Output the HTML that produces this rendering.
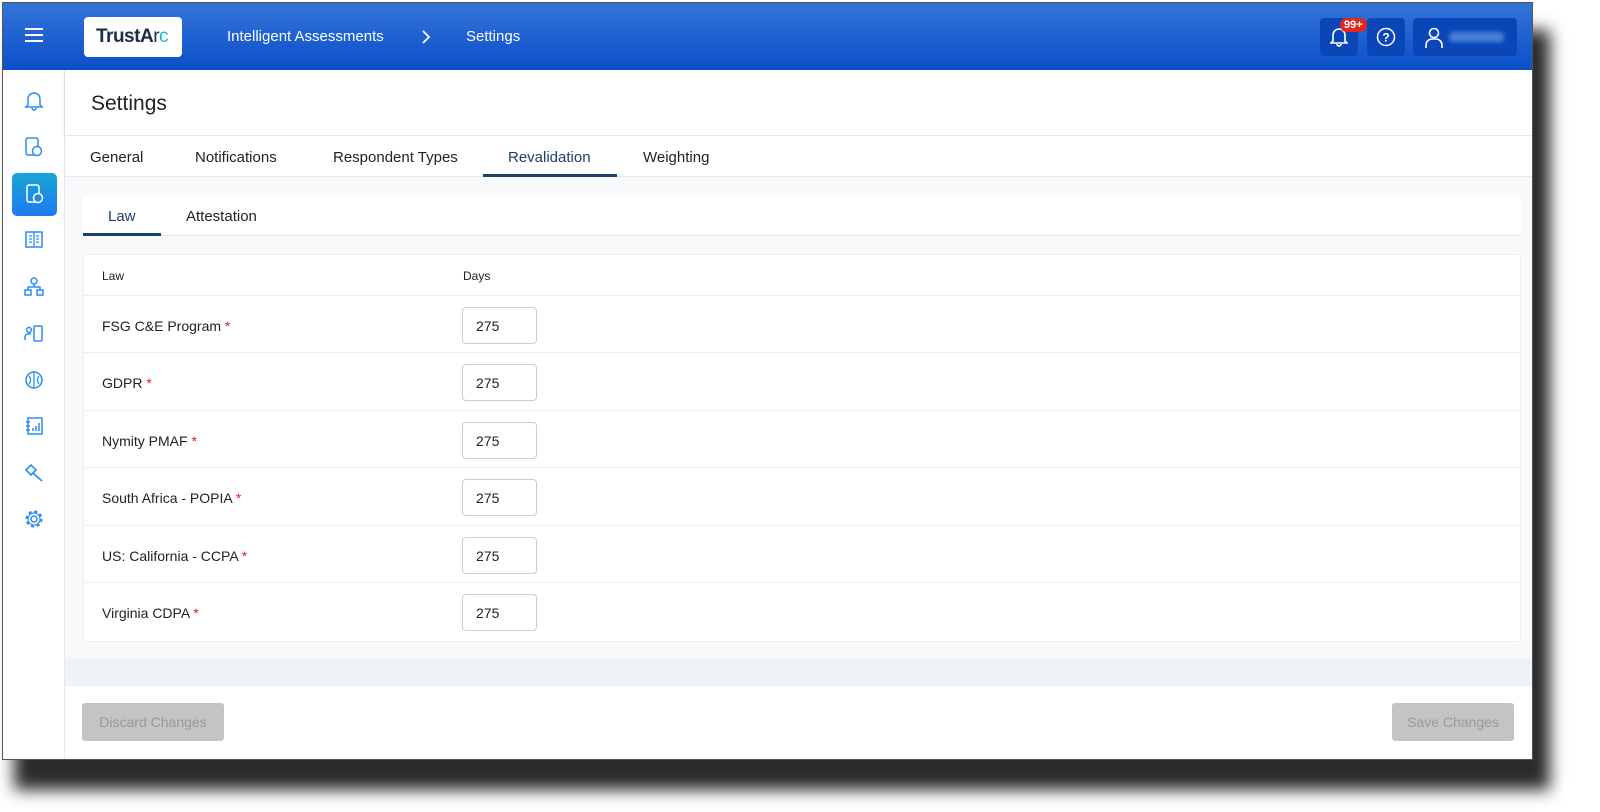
<!DOCTYPE html><html><head><style>
*{box-sizing:border-box;margin:0;padding:0}
body{width:1600px;height:812px;background:#fff;font-family:"Liberation Sans",sans-serif;position:relative;overflow:hidden;color:#222}
.shadow{position:absolute;left:14px;top:30px;width:1536px;height:760px;background:#2a2a2a;filter:blur(8px)}
.win{position:absolute;left:2px;top:2px;width:1531px;height:758px;background:#f7f9fb;overflow:hidden;border:1px solid #555}
.hdr{position:absolute;left:0;top:0;width:100%;height:67px;background:linear-gradient(#3474d9,#0b4fc8);color:#fff}
.logo{position:absolute;left:81px;top:14px;width:98px;height:40px;background:#fff;border-radius:4px;color:#1a2a4a;font-size:19px;font-weight:bold;padding:9px 0 0 12px;letter-spacing:-.5px}
.bc{position:absolute;top:25px;font-size:15px}
.hb{position:absolute;top:15px;height:38px;background:#0a46b8;border-radius:4px}
.side{position:absolute;left:0;top:67px;width:62px;bottom:0;background:#fff;border-right:1px solid #e4e8ee}
.side svg{position:absolute;left:21px}
.titl{position:absolute;left:62px;top:67px;right:0;height:65px;background:#fff;font-size:21px;padding:22px 0 0 26px;box-shadow:0 1px 3px rgba(0,0,0,.12)}
.tabs{position:absolute;left:62px;top:133px;right:0;height:41px;background:#fff;border-bottom:1px solid #e6e9ee;font-size:15px}
.tabs span{position:absolute;top:13px}
.sub{position:absolute;left:80px;top:192px;width:1438px;height:41px;background:#fff;border-bottom:1px solid #e6e9ee;font-size:15px}
.card{position:absolute;left:80px;top:251px;width:1438px;height:388px;background:#fff;border:1px solid #eceff3;border-radius:3px}
.row{position:absolute;left:0;width:100%;border-top:1px solid #edf0f3;font-size:14px}
.row .n{position:absolute;left:18px}
.row .i{position:absolute;left:378px;width:75px;height:37px;border:1px solid #c9ccd0;border-radius:4px;padding:10px 0 0 13px;font-size:14px}
.st{color:#e02020}
.band{position:absolute;left:62px;top:656px;right:0;height:27px;background:#eef3f7}
.foot{position:absolute;left:62px;top:683px;right:0;bottom:0;background:#fff}
.btn{position:absolute;top:17px;height:38px;background:#c4c4c4;border-radius:3px;color:#999;font-size:14px;padding:11px 0 0;text-align:center;white-space:nowrap}
</style></head><body>
<div class="shadow"></div>
<div class="win">
<div class="hdr">
<svg style="position:absolute;left:22px;top:25px" width="18" height="14"><path d="M0 1h18M0 7h18M0 13h18" stroke="#fff" stroke-width="2"/></svg>
<div class="logo">TrustA<span style="font-weight:normal">r</span><span style="color:#1fb3d6;font-weight:normal">c</span></div>
<div class="bc" style="left:224px">Intelligent Assessments</div>
<svg style="position:absolute;left:418px;top:27px" width="10" height="14"><path d="M2 1l6 6-6 6" stroke="#fff" stroke-width="1.8" fill="none"/></svg>
<div class="bc" style="left:463px">Settings</div>
<div class="hb" style="left:1317px;width:38px"><svg style="position:absolute;left:10px;top:9px" width="18" height="20"><path d="M3 14V8a6 6 0 0 1 12 0v6l2 2H1zM7 17a2 2 0 0 0 4 0" stroke="#fff" stroke-width="1.6" fill="none"/></svg></div>
<div style="position:absolute;left:1337px;top:15px;background:#e3261f;border-radius:8px;font-size:11px;font-weight:bold;padding:1px 4px">99+</div>
<div class="hb" style="left:1364px;width:38px"><svg style="position:absolute;left:9px;top:9px" width="20" height="20"><circle cx="10" cy="10" r="8.5" stroke="#fff" stroke-width="1.5" fill="none"/><text x="10" y="14.5" fill="#fff" font-size="12" font-weight="bold" text-anchor="middle" font-family="Liberation Sans">?</text></svg></div>
<div class="hb" style="left:1410px;width:104px"><svg style="position:absolute;left:12px;top:9px" width="18" height="22"><circle cx="9" cy="6" r="4.5" stroke="#fff" stroke-width="1.6" fill="none"/><path d="M1 21v-3a6 6 0 0 1 6-6h4a6 6 0 0 1 6 6v3" stroke="#fff" stroke-width="1.6" fill="none"/></svg><div style="position:absolute;left:36px;top:14px;width:55px;height:10px;background:#4a80d8;border-radius:4px;filter:blur(2px)"></div></div>
</div>
<div class="side">
<svg style="top:20px" width="20" height="22"><path d="M4 15V9a6 6 0 0 1 12 0v6l2 2H2zM8 18a2 2 0 0 0 4 0" stroke="#2a8ef0" stroke-width="1.5" fill="none"/></svg>
<svg style="top:66px" width="20" height="22"><rect x="2" y="2" width="12" height="17" rx="2" stroke="#2a8ef0" stroke-width="1.5" fill="none"/><circle cx="13" cy="15" r="4.5" fill="#fff" stroke="#2a8ef0" stroke-width="1.5"/></svg>
<div style="position:absolute;left:9px;top:103px;width:45px;height:43px;border-radius:5px;background:linear-gradient(#17a6d6,#2079f0)"></div>
<svg style="top:113px;left:22px" width="20" height="22"><rect x="2" y="2" width="12" height="17" rx="2" stroke="#fff" stroke-width="1.5" fill="none"/><circle cx="13" cy="15" r="4.5" fill="#1a8ce6" stroke="#fff" stroke-width="1.5"/></svg>
<svg style="top:160px" width="20" height="20"><rect x="2" y="2" width="16" height="15" stroke="#2a8ef0" stroke-width="1.5" fill="none"/><path d="M10 2v15M5 6h3M5 9h3M5 12h3M12 6h3M12 9h3M12 12h3" stroke="#2a8ef0" stroke-width="1.3"/></svg>
<svg style="top:207px" width="20" height="20"><circle cx="10" cy="4" r="3" stroke="#2a8ef0" stroke-width="1.5" fill="none"/><rect x="1" y="13" width="6" height="5" stroke="#2a8ef0" stroke-width="1.5" fill="none"/><rect x="13" y="13" width="6" height="5" stroke="#2a8ef0" stroke-width="1.5" fill="none"/><path d="M10 7v3M4 13v-3h12v3" stroke="#2a8ef0" stroke-width="1.5" fill="none"/></svg>
<svg style="top:254px" width="20" height="20"><circle cx="5" cy="6" r="2.5" stroke="#2a8ef0" stroke-width="1.5" fill="none"/><path d="M1 16v-3a3 3 0 0 1 3-3h3" stroke="#2a8ef0" stroke-width="1.5" fill="none"/><rect x="10" y="2" width="8" height="15" rx="1" stroke="#2a8ef0" stroke-width="1.5" fill="none"/></svg>
<svg style="top:300px" width="20" height="20"><circle cx="10" cy="10" r="8" stroke="#2a8ef0" stroke-width="1.5" fill="none"/><path d="M10 2v16M5 6c2 2 2 6 0 8M15 6c-2 2-2 6 0 8" stroke="#2a8ef0" stroke-width="1.3" fill="none"/></svg>
<svg style="top:346px" width="20" height="20"><rect x="4" y="2" width="14" height="16" stroke="#2a8ef0" stroke-width="1.5" fill="none"/><path d="M2 6h4M2 10h4M2 14h4M9 15v-3M12 15v-5M15 15v-8" stroke="#2a8ef0" stroke-width="1.5"/></svg>
<svg style="top:393px" width="20" height="20"><path d="M2 7l5-5 5 5-5 5zM9 10l9 8" stroke="#2a8ef0" stroke-width="1.6" fill="none"/></svg>
<svg style="top:439px" width="20" height="20"><circle cx="10" cy="10" r="3" stroke="#2a8ef0" stroke-width="1.5" fill="none"/><circle cx="10" cy="10" r="7.5" stroke="#2a8ef0" stroke-width="2.2" stroke-dasharray="3 2.9" fill="none"/><circle cx="10" cy="10" r="6" stroke="#2a8ef0" stroke-width="1.2" fill="none"/></svg>
</div>
<div class="titl">Settings</div>
<div class="tabs">
<span style="left:25px">General</span><span style="left:130px">Notifications</span><span style="left:268px">Respondent Types</span><span style="left:443px;color:#1e3f66">Revalidation</span><span style="left:578px">Weighting</span>
<div style="position:absolute;left:418px;top:38px;width:134px;height:3px;background:#1e3f66"></div>
</div>
<div class="sub">
<span style="position:absolute;left:25px;top:13px;color:#1e3f66">Law</span><span style="position:absolute;left:103px;top:13px">Attestation</span>
<div style="position:absolute;left:0;top:38px;width:78px;height:3px;background:#1e3f66"></div>
</div>
<div class="card">
<div class="row" style="top:0;border:0;height:40px;font-size:12px"><span class="n" style="top:14px">Law</span><span style="position:absolute;left:379px;top:14px">Days</span></div>
<div class="row" style="top:40px"><span class="n" style="top:22px">FSG C&amp;E Program <span class="st">*</span></span><span class="i" style="top:11px">275</span></div>
<div class="row" style="top:97px"><span class="n" style="top:22px">GDPR <span class="st">*</span></span><span class="i" style="top:11px">275</span></div>
<div class="row" style="top:155px"><span class="n" style="top:22px">Nymity PMAF <span class="st">*</span></span><span class="i" style="top:11px">275</span></div>
<div class="row" style="top:212px"><span class="n" style="top:22px">South Africa - POPIA <span class="st">*</span></span><span class="i" style="top:11px">275</span></div>
<div class="row" style="top:270px"><span class="n" style="top:22px">US: California - CCPA <span class="st">*</span></span><span class="i" style="top:11px">275</span></div>
<div class="row" style="top:327px"><span class="n" style="top:22px">Virginia CDPA <span class="st">*</span></span><span class="i" style="top:11px">275</span></div>
</div>
<div class="band"></div>
<div class="foot"><div class="btn" style="left:17px;width:142px">Discard Changes</div><div class="btn" style="right:18px;width:122px">Save Changes</div></div>
</div>
</body></html>
